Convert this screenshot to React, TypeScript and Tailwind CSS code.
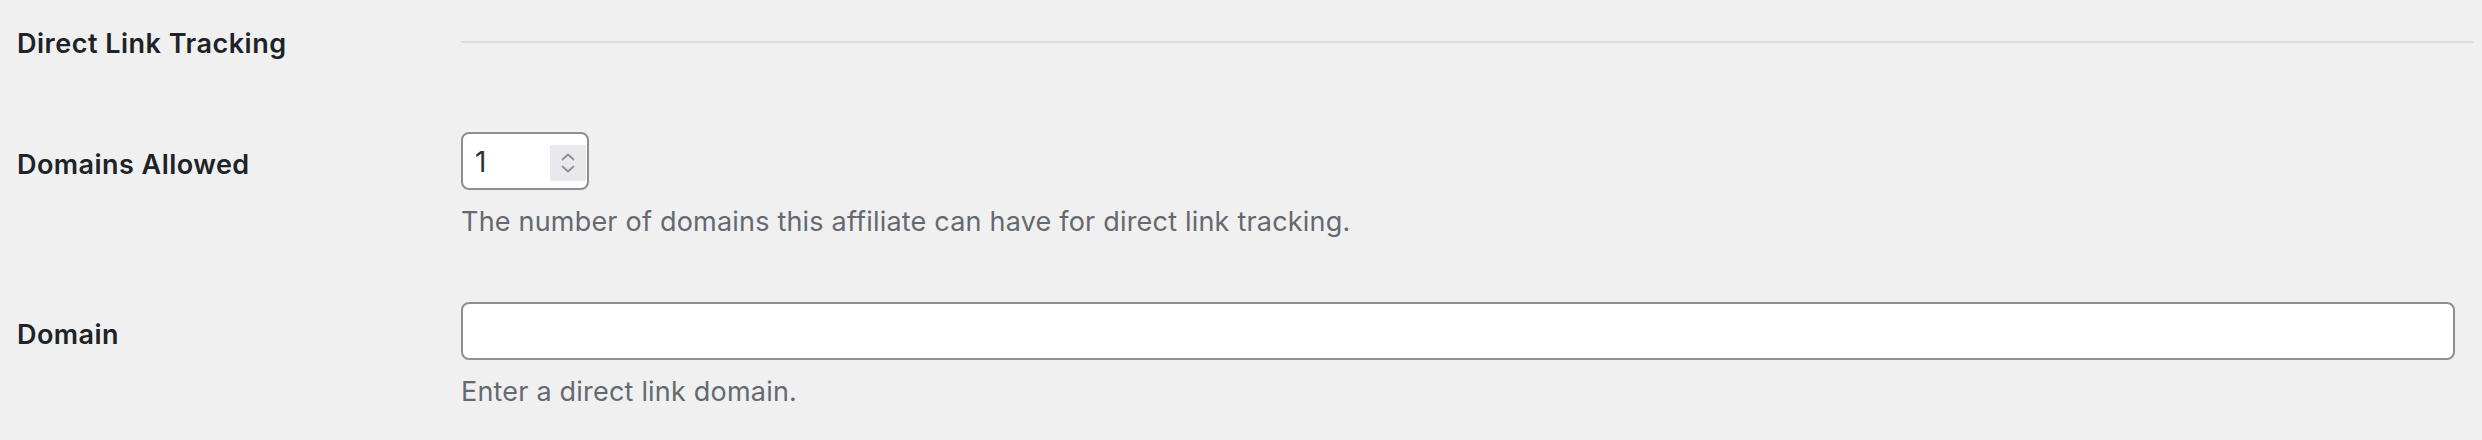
import React from "react";

function Spinner() {
  return (
    <div className="absolute right-[1px] top-[11px] flex h-[36px] w-[36px] flex-col items-center justify-center gap-[4px] bg-[#e9e9ed]">
      <svg width="14" height="8" viewBox="0 0 14 8" fill="none">
        <path d="M1.5 6.5 7 1.5l5.5 5" stroke="#8e8e93" strokeWidth="1.8" strokeLinecap="round" strokeLinejoin="round" />
      </svg>
      <svg width="14" height="8" viewBox="0 0 14 8" fill="none">
        <path d="M1.5 1.5 7 6.5l5.5-5" stroke="#8e8e93" strokeWidth="1.8" strokeLinecap="round" strokeLinejoin="round" />
      </svg>
    </div>
  );
}

export default function App() {
  return (
    <div className="min-h-screen bg-[#f0f0f1] pl-[17px] pr-[8px] font-['Inter','Liberation_Sans',sans-serif] text-[#1d2327]">
      {/* Section heading */}
      <div className="flex items-start pt-[26px]">
        <h2 className="w-[444px] shrink-0 text-[27px] font-semibold leading-[36px] tracking-[0.5px]">
          Direct Link Tracking
        </h2>
        <div className="mt-[15px] h-[2px] flex-1 bg-[#dcdcde]" />
      </div>

      {/* Domains allowed */}
      <div className="mt-[70px] flex items-start">
        <label className="w-[444px] shrink-0 pt-[15px] text-[27px] font-semibold leading-[36px] tracking-[0.45px]">
          Domains Allowed
        </label>
        <div>
          <div className="relative h-[58px] w-[128px] rounded-[8px] border-2 border-[#8c8f94] bg-white">
            <span className="absolute left-[12px] top-[10px] text-[28px] leading-[36px] text-[#2c3338]">1</span>
            <Spinner />
          </div>
          <p className="mt-[14px] text-[27px] leading-[36px] tracking-[0.2px] text-[#646970]">
            The number of domains this affiliate can have for direct link tracking.
          </p>
        </div>
      </div>

      {/* Domain */}
      <div className="mt-[62px] flex items-start">
        <label className="w-[444px] shrink-0 pt-[15px] text-[27px] font-semibold leading-[36px] tracking-[0.45px]">
          Domain
        </label>
        <div className="mr-[19px] flex-1">
          <div className="h-[58px] w-full rounded-[8px] border-2 border-[#8c8f94] bg-white" />
          <p className="mt-[14px] text-[27px] leading-[36px] tracking-[0.2px] text-[#646970]">
            Enter a direct link domain.
          </p>
        </div>
      </div>
    </div>
  );
}
